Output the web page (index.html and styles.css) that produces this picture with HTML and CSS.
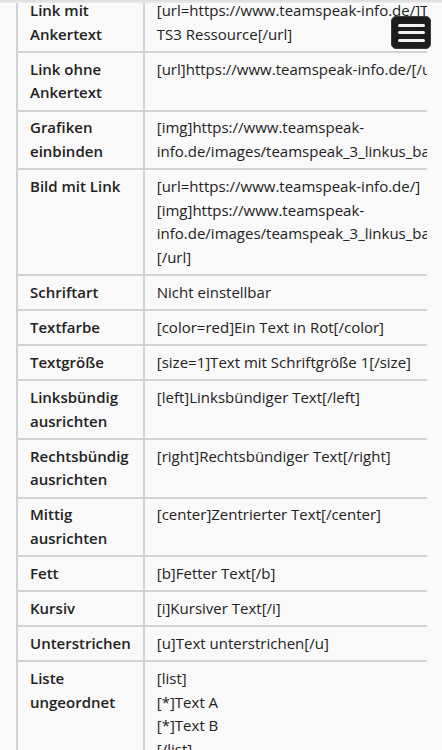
FILE: index.html
```html
<!DOCTYPE html>
<html lang="de">
<head>
<meta charset="utf-8">
<title>BBCode Übersicht</title>
<link rel="stylesheet" href="styles.css">
</head>
<body>
<div class="topshade"></div>
<button class="menu-btn" aria-label="Menü">
  <span class="bar"></span><span class="bar"></span><span class="bar"></span>
</button>
<main class="content">
  <div class="table-wrap">
    <table class="bbcode">
      <tbody>
        <tr><th>Link mit Ankertext</th><td>[url=https://www.teamspeak-info.de/]TS3<br>TS3 Ressource[/url]</td></tr>
        <tr><th>Link ohne Ankertext</th><td>[url]https://www.teamspeak-info.de/[/url]</td></tr>
        <tr><th>Grafiken einbinden</th><td>[img]https://www.teamspeak-<br>info.de/images/teamspeak_3_linkus_banner.png[/img]</td></tr>
        <tr><th>Bild mit Link</th><td>[url=https://www.teamspeak-info.de/]<br>[img]https://www.teamspeak-<br>info.de/images/teamspeak_3_linkus_banner.png[/img]<br>[/url]</td></tr>
        <tr><th>Schriftart</th><td>Nicht einstellbar</td></tr>
        <tr><th>Textfarbe</th><td>[color=red]Ein Text in Rot[/color]</td></tr>
        <tr><th>Textgröße</th><td>[size=1]Text mit Schriftgröße 1[/size]</td></tr>
        <tr><th>Linksbündig ausrichten</th><td>[left]Linksbündiger Text[/left]</td></tr>
        <tr><th>Rechtsbündig ausrichten</th><td>[right]Rechtsbündiger Text[/right]</td></tr>
        <tr><th>Mittig ausrichten</th><td>[center]Zentrierter Text[/center]</td></tr>
        <tr><th>Fett</th><td>[b]Fetter Text[/b]</td></tr>
        <tr><th>Kursiv</th><td>[i]Kursiver Text[/i]</td></tr>
        <tr><th>Unterstrichen</th><td>[u]Text unterstrichen[/u]</td></tr>
        <tr><th>Liste ungeordnet</th><td>[list]<br>[*]Text A<br>[*]Text B<br>[/list]</td></tr>
        <tr><th>Liste nummeriert</th><td>[list=1]<br>[*]Text A<br>[*]Text B<br>[/list]</td></tr>
      </tbody>
    </table>
  </div>
</main>
</body>
</html>
```

FILE: styles.css
```css
html, body {
  margin: 0;
  padding: 0;
  background: #f9f9f9;
}

body {
  font-family: "Open Sans", "Liberation Sans", sans-serif;
  font-size: 15px;
  color: #222;
  overflow: hidden;
  height: 750px;
}

.topshade {
  position: fixed;
  top: 0;
  left: 0;
  right: 0;
  height: 3px;
  background: linear-gradient(#dcdcdc, #ececec);
  z-index: 5;
}

.menu-btn {
  position: fixed;
  top: 16px;
  left: 391px;
  width: 40px;
  height: 33px;
  padding: 0;
  border: 1px solid #3a3a3a;
  border-radius: 5px;
  background: #1c1c1c;
  display: flex;
  flex-direction: column;
  align-items: center;
  justify-content: center;
  gap: 4.5px;
  z-index: 10;
}

.menu-btn .bar {
  display: block;
  width: 27px;
  height: 3px;
  border-radius: 2px;
  background: #f2f2f2;
}

.content {
  padding: 0 15px 0 16px;
  margin-top: -7.6px;
}

.table-wrap {
  overflow: hidden;
}

.bbcode {
  border-collapse: collapse;
  line-height: 23.67px;
  background: #f9f9f9;
}

.bbcode th,
.bbcode td {
  border: 2px solid #d2d2d2;
  padding: 4.67px 12px;
  text-align: left;
  vertical-align: top;
}

.bbcode th {
  width: 101px;
  font-weight: 600;
}

.bbcode td {
  width: 340px;
  font-weight: 400;
  white-space: nowrap;
}
```
